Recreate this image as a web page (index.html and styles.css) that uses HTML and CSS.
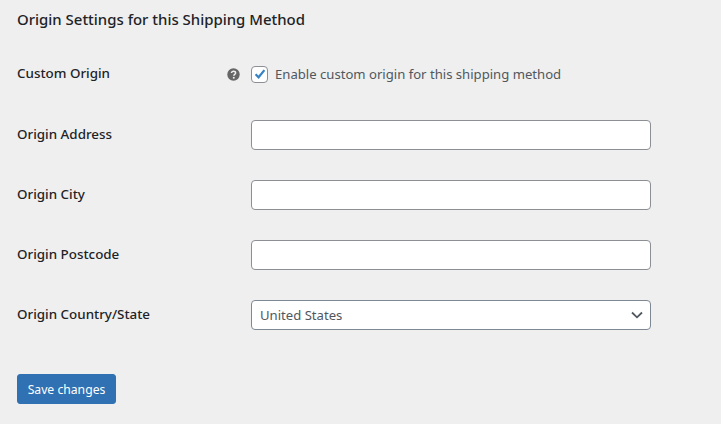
FILE: index.html
```html
<!DOCTYPE html>
<html lang="en">
<head>
<meta charset="utf-8">
<title>Origin Settings</title>
<link rel="stylesheet" href="styles.css">
</head>
<body>
<form class="page">
  <h2 class="heading">Origin Settings for this Shipping Method</h2>
  <div class="rows">
    <div class="row row-check">
      <label class="label">Custom Origin</label>
      <span class="tip">
        <svg width="13" height="13" viewBox="0 0 13 13"><circle cx="6.5" cy="6.5" r="6.2" fill="#666"/><path d="M4.5 5.1c0-1.2.9-1.9 2.1-1.9s2 .7 2 1.7c0 1.5-1.8 1.5-1.8 2.8" fill="none" stroke="#efefef" stroke-width="1.5"/><rect x="5.9" y="8.9" width="1.7" height="1.7" fill="#efefef"/></svg>
      </span>
      <span class="check-wrap">
        <span class="checkbox">
          <svg width="14" height="14" viewBox="0 0 14 14"><path d="M2.6 7.2l3 3.1 5.8-7.2" fill="none" stroke="#3582c4" stroke-width="2.2"/></svg>
        </span>
        <span class="check-text">Enable custom origin for this shipping method</span>
      </span>
    </div>
    <div class="row">
      <label class="label">Origin Address</label>
      <input class="field" type="text">
    </div>
    <div class="row">
      <label class="label">Origin City</label>
      <input class="field" type="text">
    </div>
    <div class="row">
      <label class="label">Origin Postcode</label>
      <input class="field" type="text">
    </div>
    <div class="row">
      <label class="label">Origin Country/State</label>
      <div class="field select">
        <span>United States</span>
        <svg width="12" height="8" viewBox="0 0 12 8"><path d="M1 1.5l5 4.8 5-4.8" fill="none" stroke="#50575e" stroke-width="1.8"/></svg>
      </div>
    </div>
  </div>
  <button class="save" type="button">Save changes</button>
</form>
</body>
</html>
```
FILE: styles.css
```css
html, body {
  margin: 0;
  padding: 0;
  background: #efefef;
}
body {
  height: 424px;
  overflow: hidden;
  font-family: "Noto Sans", "Open Sans", sans-serif;
  font-size: 13.12px;
  color: #3c434a;
}
.page {
  padding: 9px 0 0 17px;
  display: flex;
  flex-direction: column;
  align-items: flex-start;
}
.heading {
  margin: 0;
  font-size: 14.95px;
  line-height: 20px;
  font-weight: 500;
  color: #1d2327;
}
.rows {
  margin-top: 31px;
  display: flex;
  flex-direction: column;
  gap: 30px;
}
.row {
  display: flex;
  align-items: center;
  height: 30px;
}
.row-check {
  height: 28px;
  margin-bottom: 2px;
}
.label {
  width: 234px;
  font-size: 13.4px;
  font-weight: 500;
  line-height: 18px;
  color: #1d2327;
  margin-top: -2px;
}
.row-check .label {
  width: 211px;
  margin-top: -2px;
}
.tip {
  width: 23px;
  height: 13px;
  display: flex;
  margin-left: -1px;
  padding-right: 1px;
}
.check-wrap {
  display: flex;
  align-items: center;
  gap: 8px;
}
.checkbox {
  width: 15px;
  height: 15px;
  border: 1px solid #8c8f94;
  border-radius: 4px;
  background: #fff;
  display: flex;
  align-items: center;
  justify-content: center;
}
.check-text {
  color: #50575e;
  margin-left: -1px;
}
.field {
  box-sizing: border-box;
  width: 400px;
  height: 30px;
  margin: 0;
  border: 1px solid #8c8f94;
  border-radius: 4px;
  background: #fff;
  font: inherit;
}
.select {
  display: flex;
  align-items: center;
  justify-content: space-between;
  padding: 0 7px 0 8px;
  color: #50575e;
  border-color: #7e8993;
}
.save {
  margin-top: 44px;
  width: 99px;
  height: 30px;
  padding: 0;
  border: 1px solid #2f71b2;
  border-radius: 3px;
  background: #2f71b2;
  color: #fff;
  font-family: inherit;
  font-size: 12.2px;
}
```
